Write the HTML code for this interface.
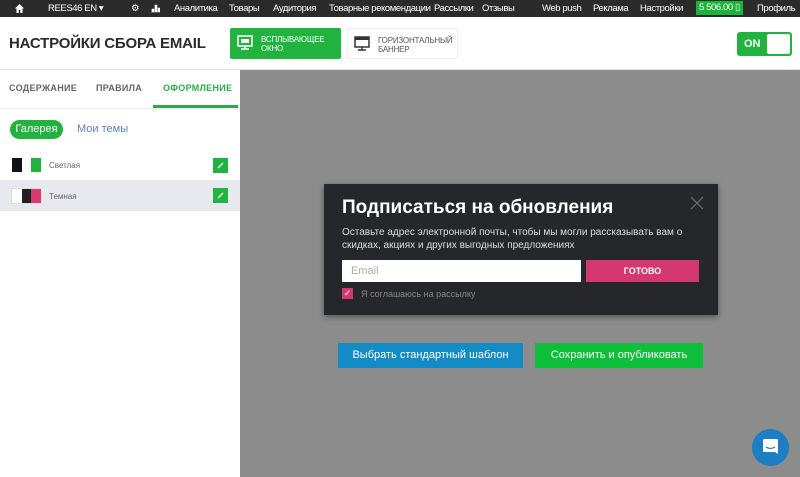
<!DOCTYPE html>
<html><head><meta charset="utf-8"><style>
*{box-sizing:border-box;margin:0;padding:0}
body{width:800px;height:477px;overflow:hidden;font-family:"Liberation Sans",sans-serif;background:#fff;position:relative}
.nav{position:absolute;left:0;top:0;width:800px;height:17px;background:#2b2b2b;color:#fff;font-size:9.5px;line-height:17px;letter-spacing:-0.4px}
.nav span{position:absolute;top:0;white-space:nowrap}
.hdr{position:absolute;top:17px;left:0;width:800px;height:53px;background:#fff;border-bottom:1px solid #e5e5e5}
.abs{position:absolute}
.side{position:absolute;top:70px;left:0;width:240px;height:407px;background:#fff}
.main{position:absolute;top:70px;left:240px;width:560px;height:407px;background:#8c8c8d}
</style></head><body>
<div class="nav">
<svg class="abs" style="left:15px;top:4px" width="9" height="9" viewBox="0 0 9 9"><path d="M4.5 0L0 4.5h1.5V9h2.2V6h1.6v3h2.2V4.5H9z" fill="#fff"/></svg>
<span style="left:48px">REES46 EN ▾</span>
<span style="left:131px">⚙</span>
<svg class="abs" style="left:151px;top:4px" width="9" height="9" viewBox="0 0 9 9"><path d="M0 9h9M1 8V5h2v3M4 8V1h2v7M7 8V4h2v4" fill="#fff" stroke="#fff" stroke-width=".6"/></svg>
<span style="left:174px">Аналитика</span>
<span style="left:229px">Товары</span>
<span style="left:273px">Аудитория</span>
<span style="left:329px">Товарные рекомендации</span>
<span style="left:434px">Рассылки</span>
<span style="left:482px">Отзывы</span>
<span style="left:542px">Web push</span>
<span style="left:593px">Реклама</span>
<span style="left:640px">Настройки</span>
<span style="left:696px;top:1px;height:14px;line-height:14px;background:#1bb33a;padding:0 3px">5 506.00 ▯</span>
<span style="left:757px">Профиль</span>
</div>
<div class="hdr">
<div class="abs" style="left:9px;top:18px;font-size:15px;font-weight:bold;color:#2b2b2b;letter-spacing:-0.2px">НАСТРОЙКИ СБОРА EMAIL</div>
<div class="abs" style="left:230px;top:11px;width:111px;height:31px;background:#21b23f;border-radius:2px;color:#fff;font-size:8px;line-height:9px;letter-spacing:-0.2px">
<svg class="abs" style="left:7px;top:7px" width="16" height="16" viewBox="0 0 16 16"><rect x="1" y="1" width="14" height="10" fill="none" stroke="#fff" stroke-width="1.5"/><rect x="4" y="4" width="8" height="4" fill="#fff"/><path d="M8 11v3M4 14h8" stroke="#fff" stroke-width="1.5"/></svg>
<div class="abs" style="left:31px;top:7px">ВСПЛЫВАЮЩЕЕ<br>ОКНО</div></div>
<div class="abs" style="left:347px;top:11px;width:111px;height:31px;background:#fff;border:1px solid #eee;border-radius:2px;color:#555;font-size:8px;line-height:9px;letter-spacing:-0.2px">
<svg class="abs" style="left:6px;top:7px" width="16" height="16" viewBox="0 0 16 16"><rect x="1" y="1" width="14" height="10" fill="none" stroke="#333" stroke-width="1.5"/><rect x="1" y="1" width="14" height="3" fill="#333"/><path d="M8 11v3M4 14h8" stroke="#333" stroke-width="1.5"/></svg>
<div class="abs" style="left:30px;top:7px">ГОРИЗОНТАЛЬНЫЙ<br>БАННЕР</div></div>
<div class="abs" style="left:737px;top:15px;width:55px;height:24px;background:#21b23f;border-radius:3px"><span class="abs" style="left:7px;top:6px;color:#fff;font-size:11px;font-weight:bold">ON</span><div class="abs" style="left:30px;top:2px;width:23px;height:20px;background:#fff;border-radius:2px"></div></div>
</div>
<div class="side">
<div class="abs" style="left:9px;top:13px;font-size:9px;font-weight:bold;color:#666;letter-spacing:.3px">СОДЕРЖАНИЕ</div>
<div class="abs" style="left:96px;top:13px;font-size:9px;font-weight:bold;color:#666;letter-spacing:.3px">ПРАВИЛА</div>
<div class="abs" style="left:163px;top:13px;font-size:9px;font-weight:bold;color:#2faa4a;letter-spacing:.3px">ОФОРМЛЕНИЕ</div>
<div class="abs" style="left:153px;top:35px;width:85px;height:3px;background:#2faa4a"></div>
<div class="abs" style="left:0;top:38px;width:240px;height:1px;background:#eee"></div>
<div class="abs" style="left:10px;top:50px;width:53px;height:19px;background:#21b23f;border-radius:10px;color:#fff;font-size:11px;line-height:19px;text-align:center">Галерея</div>
<div class="abs" style="left:77px;top:53px;font-size:11px;color:#5b7fbf">Мои темы</div>
<div class="abs" style="left:12px;top:88px;width:10px;height:14px;background:#111"></div>
<div class="abs" style="left:31px;top:88px;width:10px;height:14px;background:#21b23f"></div>
<div class="abs" style="left:49px;top:91px;font-size:8px;color:#666">Светлая</div>
<div class="abs" style="left:213px;top:88px;width:15px;height:15px;background:#21b23f"><svg class="abs" style="left:4px;top:4px" width="7" height="7"><path d="M1 6L6 1" stroke="#fff" stroke-width="1.3"/></svg></div>
<div class="abs" style="left:0;top:110px;width:240px;height:31px;background:#e8e8ef"></div>
<div class="abs" style="left:11px;top:118px;width:30px;height:16px;background:#fff;border:1px solid #ddd"></div>
<div class="abs" style="left:22px;top:119px;width:10px;height:14px;background:#222"></div>
<div class="abs" style="left:31px;top:119px;width:10px;height:14px;background:#d83a6e"></div>
<div class="abs" style="left:49px;top:122px;font-size:8px;color:#666">Темная</div>
<div class="abs" style="left:213px;top:118px;width:15px;height:15px;background:#21b23f"><svg class="abs" style="left:4px;top:4px" width="7" height="7"><path d="M1 6L6 1" stroke="#fff" stroke-width="1.3"/></svg></div>
</div>
<div class="main">
<div class="abs" style="left:84px;top:114px;width:394px;height:131px;background:#25272b;box-shadow:0 2px 6px rgba(0,0,0,.4)">
<div class="abs" style="left:18px;top:13px;color:#fff;font-size:19px;font-weight:bold">Подписаться на обновления</div>
<svg class="abs" style="left:366px;top:12px" width="14" height="14"><path d="M1 1L13 13M13 1L1 13" stroke="#666" stroke-width="1.3"/></svg>
<div class="abs" style="left:18px;top:43px;width:350px;color:#ddd;font-size:10px;line-height:12.5px">Оставьте адрес электронной почты, чтобы мы могли рассказывать вам о скидках, акциях и других выгодных предложениях</div>
<div class="abs" style="left:18px;top:76px;width:239px;height:22px;background:#fff"><span class="abs" style="left:9px;top:5px;font-size:11px;color:#aaa">Email</span></div>
<div class="abs" style="left:262px;top:76px;width:113px;height:22px;background:#d53870;color:#fff;font-size:9px;font-weight:bold;text-align:center;line-height:22px">ГОТОВО</div>
<div class="abs" style="left:18px;top:104px;width:11px;height:11px;background:#d53870;color:#fff;font-size:9px;line-height:11px;text-align:center">✓</div>
<div class="abs" style="left:37px;top:105px;font-size:9px;color:#888">Я соглашаюсь на рассылку</div>
</div>
<div class="abs" style="left:98px;top:273px;width:185px;height:25px;background:#158bc5;color:#fff;font-size:11px;line-height:25px;text-align:center">Выбрать стандартный шаблон</div>
<div class="abs" style="left:295px;top:273px;width:168px;height:25px;background:#0fbe3a;color:#fff;font-size:11px;line-height:25px;text-align:center">Сохранить и опубликовать</div>
<div class="abs" style="left:512px;top:359px;width:37px;height:37px;border-radius:50%;background:#1d7ec3">
<svg class="abs" style="left:10px;top:9px" width="17" height="19" viewBox="0 0 17 19"><path d="M2 1h13a1 1 0 011 1v14l-3-2H2a1 1 0 01-1-1V2a1 1 0 011-1z" fill="#fff"/><path d="M4 9q4.5 3 9 0" stroke="#1d7ec3" stroke-width="1.3" fill="none"/></svg></div>
</div>
</body></html>
